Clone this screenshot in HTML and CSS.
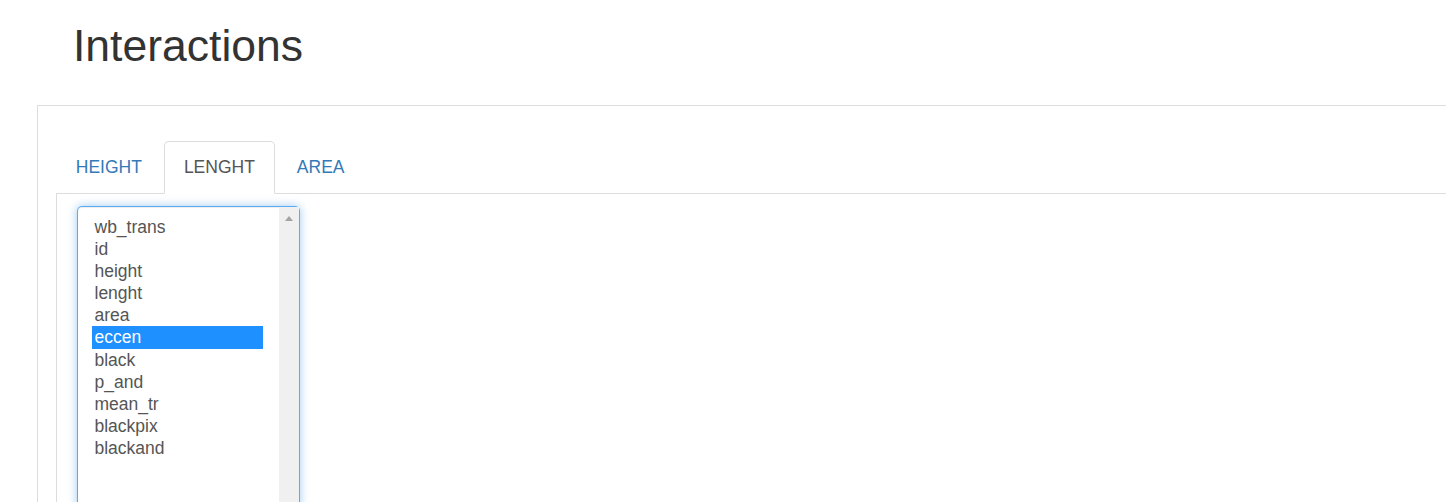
FILE: index.html
```html
<!DOCTYPE html>
<html>
<head>
<meta charset="utf-8">
<title>Interactions</title>
<link rel="stylesheet" href="styles.css">
</head>
<body>
<div class="page">
  <h1 class="title">Interactions</h1>
  <div class="panel">
    <ul class="nav-tabs">
      <li class="tab"><a href="#">HEIGHT</a></li>
      <li class="tab active"><a href="#">LENGHT</a></li>
      <li class="tab"><a href="#">AREA</a></li>
    </ul>
    <div class="tab-content">
      <div class="listbox">
        <div class="opts">
          <div class="opt">wb_trans</div>
          <div class="opt">id</div>
          <div class="opt">height</div>
          <div class="opt">lenght</div>
          <div class="opt">area</div>
          <div class="opt selected">eccen</div>
          <div class="opt">black</div>
          <div class="opt">p_and</div>
          <div class="opt">mean_tr</div>
          <div class="opt">blackpix</div>
          <div class="opt">blackand</div>
        </div>
        <div class="scrollbar"><span class="arrow"></span></div>
      </div>
    </div>
  </div>
</div>
</body>
</html>
```

FILE: styles.css
```css
html, body {
  margin: 0;
  padding: 0;
  background: #fff;
  overflow: hidden;
}
body {
  font-family: "Liberation Sans", Arial, Helvetica, sans-serif;
  color: #333;
  height: 502px;
}
.page {
  padding-left: 37px;
}
.title {
  font-size: 44.5px;
  line-height: 49.5px;
  font-weight: 500;
  color: #333;
  margin: 21px 0 34.5px 36px;
}
.panel {
  border-top: 1px solid #ddd;
  border-left: 1px solid #ddd;
  padding: 35px 0 0 18px;
  height: 361px;
}
.nav-tabs {
  list-style: none;
  margin: 0;
  padding: 0;
  display: flex;
  border-bottom: 1px solid #ddd;
}
.tab {
  margin-right: 2.5px;
  margin-bottom: -1px;
}
.tab a {
  display: block;
  padding: 13px 18.75px;
  font-size: 17.5px;
  line-height: 25px;
  color: #337ab7;
  text-decoration: none;
  border: 1px solid transparent;
  border-radius: 5px 5px 0 0;
}
.tab.active a {
  color: #555;
  background: #fff;
  border-color: #ddd #ddd transparent;
}
.tab-content {
  border-left: 1px solid #ddd;
  padding: 12px 0 0 20px;
  height: 296px;
  overflow: hidden;
}
.listbox {
  display: flex;
  width: 221px;
  height: 300px;
  border: 1px solid #5eaaf0;
  border-bottom: 0;
  border-radius: 5px 5px 0 0;
  box-shadow: inset 0 1px 1px rgba(0,0,0,.075), 0 0 10px rgba(102,175,233,.65);
  background: #fff;
}
.opts {
  flex: 0 0 171px;
  margin: 8.5px 0 0 14px;
}
.opt {
  font-size: 17.5px;
  line-height: 22.2px;
  height: 22.2px;
  padding: 0 2.5px;
  color: #555;
  white-space: nowrap;
}
.opt.selected {
  background: #1e90ff;
  color: #fff;
}
.scrollbar {
  margin-left: auto;
  width: 20px;
  background: #f0f0f0;
  display: flex;
  justify-content: center;
  align-items: flex-start;
}
.arrow {
  margin-top: 9px;
  width: 0;
  height: 0;
  border-left: 4.5px solid transparent;
  border-right: 4.5px solid transparent;
  border-bottom: 5px solid #a3a3a3;
}
```
